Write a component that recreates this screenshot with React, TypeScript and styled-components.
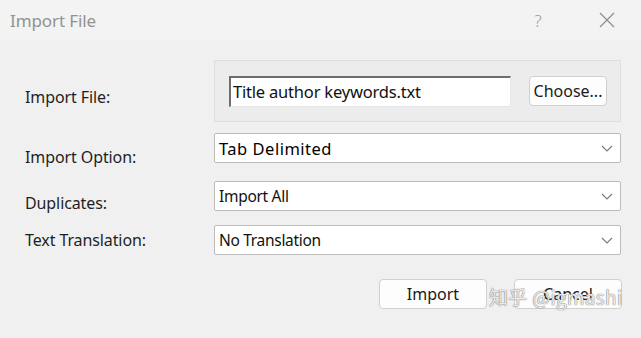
import styled, { createGlobalStyle } from "styled-components";

const Global = createGlobalStyle`
  html, body {
    margin: 0;
    padding: 0;
    background: #f0f0f0;
  }
  * {
    box-sizing: border-box;
  }
`;

const Dialog = styled.div`
  position: relative;
  width: 641px;
  height: 338px;
  background: #f0f0f0;
  font-family: "Noto Sans", "Open Sans", sans-serif;
  color: #1a1a1a;
  overflow: hidden;
`;

const TitleBar = styled.div`
  display: flex;
  align-items: center;
  height: 40px;
  padding: 0 10px 0 10px;
  background: #f3f3f3;
`;

const TitleText = styled.span`
  flex: 1;
  font-size: 17px;
  color: #929292;
  letter-spacing: -0.1px;
`;

const TitleButton = styled.span<{ $ml?: number }>`
  display: flex;
  align-items: center;
  justify-content: center;
  width: 48px;
  height: 40px;
  margin-left: ${(p) => p.$ml ?? 0}px;
  color: #9a9a9a;
  font-size: 17px;
  font-weight: 300;
`;

const Body = styled.div`
  display: grid;
  grid-template-columns: 190px 406px;
  padding: 20px 0 0 25px;
  align-items: center;
`;

const Label = styled.span<{ $h: number }>`
  display: flex;
  align-items: center;
  height: ${(p) => p.$h}px;
  font-size: 16px;
  letter-spacing: -0.1px;
  color: #1f1f1f;
`;

const FileGroup = styled.div`
  display: flex;
  align-items: center;
  gap: 18px;
  height: 62px;
  margin-left: -1px;
  padding: 0 13px 0 14px;
  border: 1px solid #dedede;
  background: #ececec;
  margin-bottom: 11px;
`;

const FileInput = styled.div`
  width: 282px;
  height: 31px;
  background: #fff;
  border-top: 2px solid #6d6d6d;
  border-left: 2px solid #6d6d6d;
  border-right: 1px solid #e6e6e6;
  border-bottom: 1px solid #e6e6e6;
  display: flex;
  align-items: center;
  padding-left: 2px;
  font-size: 16.5px;
  letter-spacing: -0.2px;
  color: #111;
`;

const PushButton = styled.button<{ $w: number }>`
  width: ${(p) => p.$w}px;
  height: 30px;
  border: 1px solid #d0d0d0;
  border-radius: 4px;
  background: #fdfdfd;
  font-family: "Noto Sans", "Open Sans", sans-serif;
  font-size: 16px;
  color: #1a1a1a;
  padding: 0;
`;

const Select = styled.div<{ $mb: number; $strong?: boolean }>`
  display: flex;
  align-items: center;
  justify-content: space-between;
  height: 30px;
  margin-left: -1px;
  margin-bottom: ${(p) => p.$mb}px;
  padding: 0 6px 0 4px;
  background: #fff;
  border: 1px solid #bdbdbd;
  border-radius: 2px;
  font-size: ${(p) => (p.$strong ? 16.5 : 15.5)}px;
  letter-spacing: ${(p) => (p.$strong ? 0.5 : -0.3)}px;
  color: ${(p) => (p.$strong ? "#000" : "#111")};
`;

const Footer = styled.div`
  display: flex;
  justify-content: flex-end;
  gap: 27px;
  padding: 24px 19px 0 0;
`;

const Watermark = styled.div`
  position: absolute;
  left: 489px;
  top: 283px;
  font-family: "Noto Sans CJK SC", "Noto Sans", sans-serif;
  font-size: 19px;
  color: rgba(255, 255, 255, 0.85);
  text-shadow: 0 0 1px #777, 0 0 1px #777;
  letter-spacing: 0.3px;
`;

const Chevron = () => (
  <svg width="14" height="14" viewBox="0 0 14 14">
    <path d="M2 5 L7 10 L12 5" fill="none" stroke="#7a7a7a" strokeWidth="1.1" />
  </svg>
);

const CloseIcon = () => (
  <svg width="16" height="16" viewBox="0 0 16 16">
    <path d="M1 1 L15 15 M15 1 L1 15" stroke="#8c8c8c" strokeWidth="1.2" />
  </svg>
);

export default function App() {
  return (
    <Dialog>
      <Global />
      <TitleBar>
        <TitleText>Import File</TitleText>
        <TitleButton>?</TitleButton>
        <TitleButton $ml={21}>
          <CloseIcon />
        </TitleButton>
      </TitleBar>
      <Body>
        <Label $h={73}>Import File:</Label>
        <FileGroup>
          <FileInput>Title author keywords.txt</FileInput>
          <PushButton $w={78}>Choose...</PushButton>
        </FileGroup>
        <Label $h={48}>Import Option:</Label>
        <Select $mb={18} $strong>
          Tab Delimited
          <Chevron />
        </Select>
        <Label $h={44}>Duplicates:</Label>
        <Select $mb={14}>
          Import All
          <Chevron />
        </Select>
        <Label $h={30}>Text Translation:</Label>
        <Select $mb={0}>
          No Translation
          <Chevron />
        </Select>
      </Body>
      <Footer>
        <PushButton $w={108}>Import</PushButton>
        <PushButton $w={108}>Cancel</PushButton>
      </Footer>
      <Watermark>知乎 @igmashi</Watermark>
    </Dialog>
  );
}
